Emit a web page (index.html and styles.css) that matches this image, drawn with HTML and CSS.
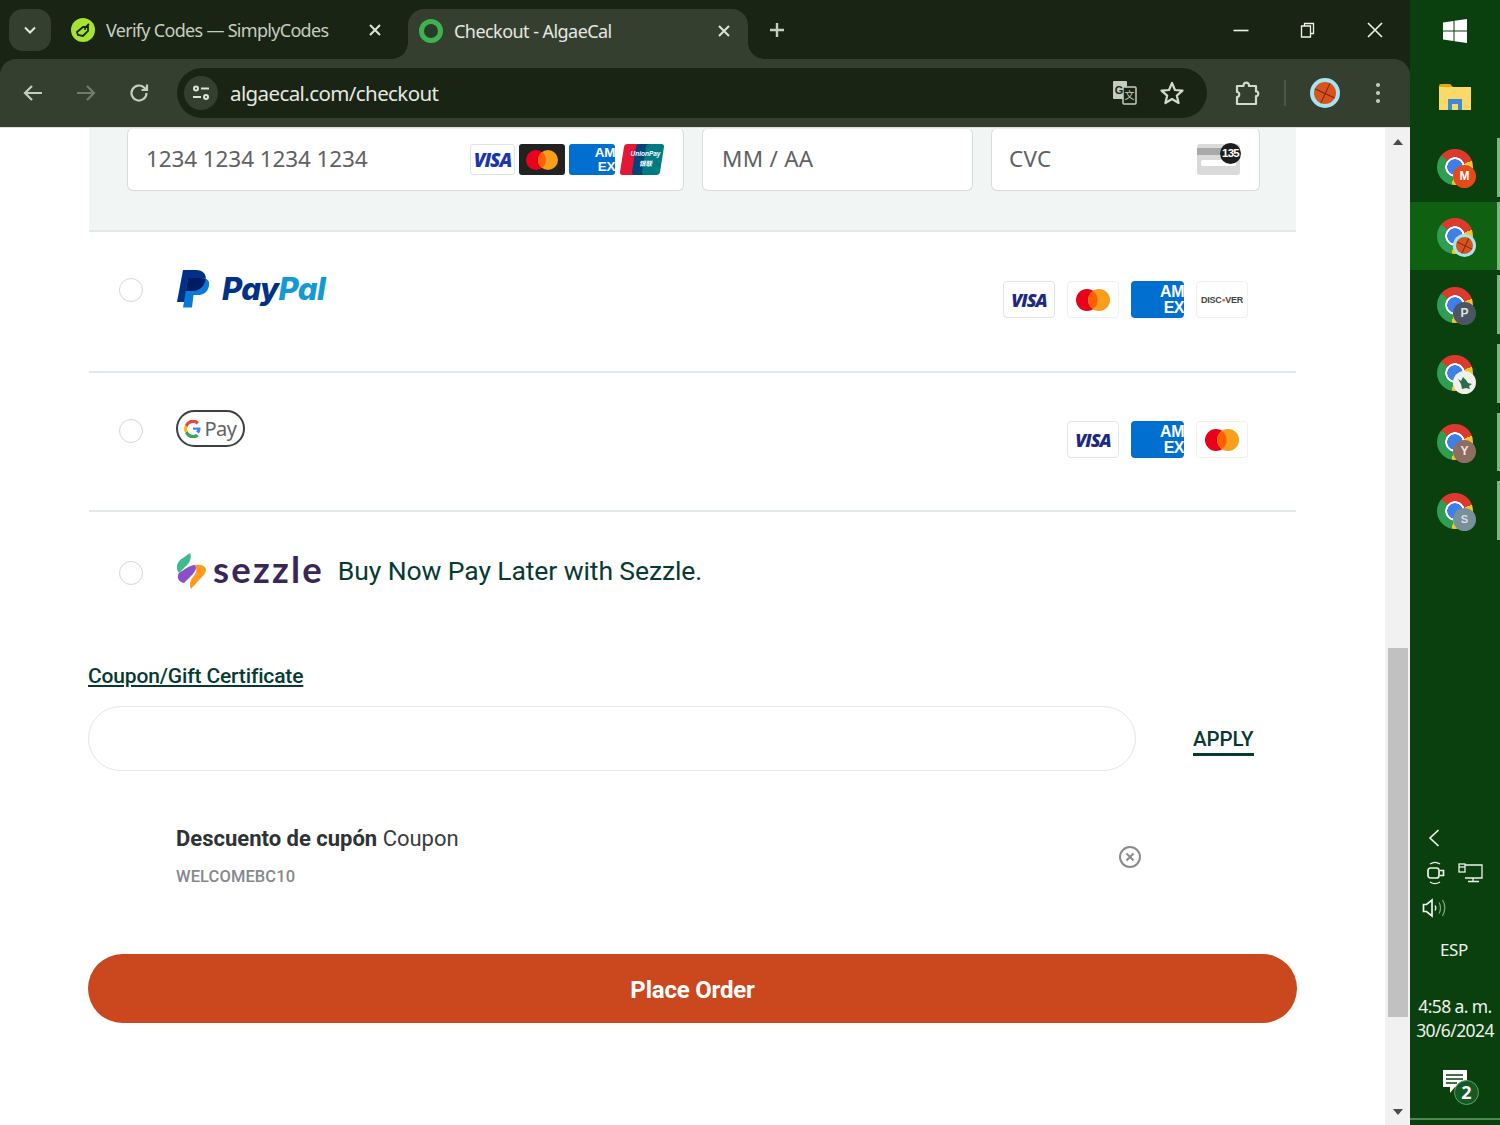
FILE: index.html
```html
<!DOCTYPE html>
<html lang="es">
<head>
<meta charset="utf-8">
<title>Checkout - AlgaeCal</title>
<link rel="stylesheet" href="styles.css">
</head>
<body>
<div class="screen">
  <div class="browser">
    <header class="tabstrip">
      <button class="tab-search"><svg width="16" height="16" viewBox="0 0 16 16"><path d="M3 5.500l5 5 5-5" class="ic-w"/></svg></button>
      <div class="tab tab-idle">
        <span class="fav-lime"><svg width="18" height="18" viewBox="0 0 18 18"><path d="M3 11l6-5h5v4l-5 5-5-1z" class="ic-tag"/><path d="M11 7l4-4" class="ic-tag"/><circle cx="11" cy="8" r="1" fill="#1a2414"/></svg></span>
        <span class="tab-title tab-title-idle">Verify Codes — SimplyCodes</span>
        <svg class="tab-x" width="14" height="14" viewBox="0 0 14 14"><path d="M2 2l10 10M12 2L2 12" class="ic-x"/></svg>
      </div>
      <div class="tab tab-active">
        <span class="fav-ring"></span>
        <span class="tab-title tab-title-on">Checkout - AlgaeCal</span>
        <svg class="tab-x" width="14" height="14" viewBox="0 0 14 14"><path d="M2 2l10 10M12 2L2 12" class="ic-x"/></svg>
      </div>
      <svg class="newtab" width="18" height="18" viewBox="0 0 18 18"><path d="M9 2v14M2 9h14" class="ic-plus"/></svg>
      <div class="winctl">
        <svg width="18" height="18" viewBox="0 0 18 18"><path d="M1.500 9.500h15" class="ic-win"/></svg>
        <svg width="18" height="18" viewBox="0 0 18 18"><path d="M5.500 4.500V2.500h9v10h-2.500M2.500 5h9v11h-9z" class="ic-win-thin"/></svg>
        <svg width="18" height="18" viewBox="0 0 18 18"><path d="M2 2l14 14M16 2L2 16" class="ic-win"/></svg>
      </div>
    </header>

    <nav class="toolbar">
      <svg class="nav-ic" width="24" height="24" viewBox="0 0 24 24"><path d="M21 12H4M11 5l-7 7 7 7" class="ic-nav"/></svg>
      <svg class="nav-ic nav-off" width="24" height="24" viewBox="0 0 24 24"><path d="M3 12h17M13 5l7 7-7 7" class="ic-nav"/></svg>
      <svg class="nav-ic" width="24" height="24" viewBox="0 0 24 24"><path d="M19.500 12a7.500 7.500 0 1 1-2.300-5.400L20 9M20 3.500V9h-5.500" class="ic-nav"/></svg>
      <div class="omnibox">
        <span class="site-info"><svg width="20" height="20" viewBox="0 0 20 20"><circle cx="5" cy="5.500" r="2" class="ic-tune"/><path d="M10 5.500h8M2 14h8" class="ic-tune"/><circle cx="15" cy="14" r="2" class="ic-tune"/></svg></span>
        <span class="url">algaecal.com/checkout</span>
        <svg class="omni-translate" width="26" height="26" viewBox="0 0 26 26"><rect x="1" y="1" width="14" height="18" rx="1" fill="#c5cdc0"/><rect x="11" y="7" width="13" height="17" rx="1" fill="#1a2414" stroke="#c5cdc0" stroke-width="1.500"/><text x="7" y="14" class="tr-g">G</text><text x="17.500" y="19" class="tr-a">文</text></svg>
        <svg class="omni-star" width="26" height="26" viewBox="0 0 26 26"><path d="M13 3l3 7 7.500.6-5.700 5 1.800 7.400-6.600-4-6.600 4 1.800-7.400-5.700-5 7.500-.6z" class="ic-star"/></svg>
      </div>
      <svg class="ext" width="26" height="26" viewBox="0 0 26 26"><path d="M3 6h6.500c-.5-4.500 6-4.500 5.500 0h7v5.500c3-.5 3 5 0 4.500v8H3v-7c3 0 3-5 0-5z" class="ic-star"/></svg>
      <span class="tool-sep"></span>
      <span class="avatar"><span class="ball"></span></span>
      <svg class="kebab" width="6" height="24" viewBox="0 0 6 24"><circle cx="3" cy="4" r="2" fill="#c5cdc0"/><circle cx="3" cy="12" r="2" fill="#c5cdc0"/><circle cx="3" cy="20" r="2" fill="#c5cdc0"/></svg>
    </nav>

    <div class="viewport">
      <main class="page">
        <section class="card-panel">
          <div class="field field-num">
            <span class="ph ph-num">1234 1234 1234 1234</span>
            <div class="brands">
              <span class="mini mini-visa">VISA</span>
              <span class="mini mini-mc"><svg width="34" height="22" viewBox="0 0 34 22"><circle cx="11" cy="11" r="10" fill="#eb001b"/><circle cx="23" cy="11" r="10" fill="#f79e1b"/><path d="M17 3a10 10 0 0 1 0 16 10 10 0 0 1 0-16z" fill="#ff5f00"/></svg></span>
              <span class="mini mini-amex"><span>AM<br>EX</span></span>
              <span class="mini-up"><i class="up-r"></i><i class="up-b"></i><i class="up-g"></i><span class="up-t">UnionPay<br>银联</span></span>
            </div>
          </div>
          <div class="field field-exp"><span class="ph">MM / AA</span></div>
          <div class="field field-cvc">
            <span class="ph">CVC</span>
            <span class="cvc-card"><i class="cvc-strip"></i><i class="cvc-line"></i><b class="cvc-badge">135</b></span>
          </div>
        </section>

        <section class="pay-row pay-row-first">
          <span class="radio"></span>
          <span class="pp-logo">
            <svg width="33" height="38" viewBox="0 0 33 38"><path d="M6 0h13c7 0 11 4 9.500 11-1.500 7-6 10-13 10H11L9 32H0z" fill="#003087"/><path d="M11 8h14c5.500 0 8 3 7 8-1.500 6.500-5.500 9-11.500 9h-4L15 37.500H6z" fill="#0a7ad6"/><path d="M11 8h11.500c2.300 0 4.300.4 6 1.300C27.500 16 23 21 15.500 21H9z" fill="#001c64"/></svg>
            <span class="pp-text"><span class="pp-pay">Pay</span><span class="pp-pal">Pal</span></span>
          </span>
          <div class="pay-cards">
            <span class="pc pc-visa">VISA</span>
            <span class="pc pc-light"><svg width="36" height="24" viewBox="0 0 36 24"><circle cx="12" cy="12" r="11" fill="#eb001b"/><circle cx="24" cy="12" r="11" fill="#f79e1b"/><path d="M18 3a11 11 0 0 1 0 18 11 11 0 0 1 0-18z" fill="#ff5f00"/></svg></span>
            <span class="pc pc-amex"><span>AM<br>EX</span></span>
            <span class="pc pc-light pc-disc">DISC<b>●</b>VER</span>
          </div>
        </section>

        <section class="pay-row pay-row-mid">
          <span class="radio"></span>
          <span class="gpay">
            <svg width="18" height="18" viewBox="0 0 18 18"><path d="M9 7.500h7.400c.4 2.300-.2 4.500-1.600 6l-2.700-2.100c.6-.4 1-1 1.200-1.700H9z" fill="#4285f4"/><path d="M3.500 11c.9 2.300 3 3.900 5.500 3.900 1.200 0 2.200-.3 3.100-.9l2.700 2.100A8.500 8.500 0 0 1 1 12.800z" fill="#34a853"/><path d="M3.500 11a6 6 0 0 1 0-4L1 5a8.500 8.500 0 0 0 0 7.800z" fill="#fbbc04"/><path d="M3.500 7C4.400 4.700 6.500 3.100 9 3.100c1.400 0 2.700.5 3.600 1.400l2.300-2.300A8.500 8.500 0 0 0 1 5z" fill="#ea4335"/></svg>
            <span class="gpay-t">Pay</span>
          </span>
          <div class="pay-cards pay-cards-low">
            <span class="pc pc-visa">VISA</span>
            <span class="pc pc-amex"><span>AM<br>EX</span></span>
            <span class="pc pc-light"><svg width="36" height="24" viewBox="0 0 36 24"><circle cx="12" cy="12" r="11" fill="#eb001b"/><circle cx="24" cy="12" r="11" fill="#f79e1b"/><path d="M18 3a11 11 0 0 1 0 18 11 11 0 0 1 0-18z" fill="#ff5f00"/></svg></span>
          </div>
        </section>

        <section class="pay-row pay-row-last">
          <span class="radio"></span>
          <span class="sz-logo">
            <svg width="32" height="38" viewBox="0 0 32 38"><path d="M15 1C17 6 15 11 10 15L4 21C0 16 2 9 8 6z" fill="#3dbb8c"/><path d="M4 21C1 26 4 30 9 31l7-7c5-5 6-8 4-11-3 0-7 2-10 4z" fill="#8a4fc9"/><path d="M20 13c6-1 11 1 11 5 0 3-3 6-6 9l-9 10c-2-4-1-8 2-12 4-4 4-8 2-12z" fill="#ff9a1f"/></svg>
            <span class="sz-text">sezzle</span>
          </span>
          <span class="sz-copy">Buy Now Pay Later with Sezzle.</span>
        </section>

        <a class="coupon-link" href="#">Coupon/Gift Certificate</a>
        <div class="coupon-form">
          <span class="coupon-input"></span>
          <a class="apply" href="#">APPLY</a>
        </div>
        <div class="coupon-applied">
          <div class="coupon-info">
            <div class="coupon-name"><b>Descuento de cupón</b> Coupon</div>
            <div class="coupon-code">WELCOMEBC10</div>
          </div>
          <svg class="coupon-x" width="24" height="24" viewBox="0 0 24 24"><circle cx="12" cy="12" r="10" class="ic-cx"/><path d="M8.500 8.500l7 7M15.500 8.500l-7 7" class="ic-cx"/></svg>
        </div>
        <button class="place">Place Order</button>
      </main>
      <aside class="scrollbar">
        <span class="arrow-up"></span>
        <span class="thumb"></span>
        <span class="arrow-down"></span>
      </aside>
    </div>
  </div>

  <aside class="taskbar">
    <div class="tb-start"><svg width="24" height="24" viewBox="0 0 24 24"><path d="M0 3.500l10.500-1.500v9.500H0zM11.500 1.800L24 0v11.500H11.500zM0 12.500h10.500V22L0 20.500zM11.500 12.500H24V24l-12.500-1.800z" fill="#fff"/></svg></div>
    <div class="tb-folder"><svg width="32" height="26" viewBox="0 0 32 26"><path d="M0 2a2 2 0 0 1 2-2h9l3 3H0z" fill="#e8a90c"/><rect y="3" width="32" height="23" fill="#fcd866"/><path d="M9 26V15h14v11h-4v-6h-6v6z" fill="#3b8ad9"/></svg></div>
    <div class="tile"><span class="chrome"></span><span class="badge badge-m">M</span></div>
    <div class="tile tile-on"><span class="chrome"></span><span class="badge badge-ball"><span class="ball ball-s"></span></span></div>
    <div class="tile"><span class="chrome"></span><span class="badge badge-p">P</span></div>
    <div class="tile"><span class="chrome"></span><span class="badge badge-frog"><svg width="16" height="14" viewBox="0 0 16 14"><path d="M1 3l3 2 2-4 3 3 2 3 4 1-3 2 1 3-4-1-4 1-1-5z" fill="#2f6b45"/></svg></span></div>
    <div class="tile"><span class="chrome"></span><span class="badge badge-y">Y</span></div>
    <div class="tile"><span class="chrome"></span><span class="badge badge-s">S</span></div>

    <div class="tray">
      <svg class="tray-chev" width="12" height="18" viewBox="0 0 12 18"><path d="M10.500 1L2 9l8.500 8" class="ic-tray"/></svg>
      <div class="tray-pair">
        <svg width="18" height="24" viewBox="0 0 18 24"><path d="M3 3c3-2 7-2 10 0M3 21c3 2 7 2 10 0" class="ic-tray-thin"/><rect x="1" y="7" width="11" height="10" rx="2.500" class="ic-tray"/><path d="M13 9.500h3.500v5H13" class="ic-tray"/></svg>
        <svg width="25" height="20" viewBox="0 0 25 20"><path d="M7 2h17v13H7M15 15v3M10 18.500h11" class="ic-tray-thin"/><rect x="1" y="1" width="6" height="8" class="ic-tray-thin"/><path d="M1 4h6" class="ic-tray-thin"/></svg>
      </div>
      <svg class="tray-vol" width="24" height="22" viewBox="0 0 24 22"><path d="M1.500 7.500h3L10 3v16l-5.500-4.500h-3z" class="ic-tray"/><path d="M13 8.500c1 1.500 1 3.500 0 5" class="ic-tray-thin"/><path d="M17 5.500c2 3 2 8 0 11M20.500 3c3 4.500 3 11 0 16" class="ic-tray-dim"/></svg>
      <div class="tray-lang">ESP</div>
      <div class="tray-clock"><div>4:58 a. m.</div><div>30/6/2024</div></div>
      <div class="tray-note">
        <svg width="24" height="24" viewBox="0 0 24 24"><path d="M0 0h24v17H12l-5 6v-6H0z" fill="#fff"/><path d="M3 5h17M3 9h17M3 13h11" stroke="#0a400d" stroke-width="1.500"/></svg>
        <span class="note-badge">2</span>
      </div>
    </div>
    <div class="tb-line"></div>
  </aside>
</div>
</body>
</html>
```

FILE: styles.css
```css
* { box-sizing: border-box; }
html, body { margin: 0; padding: 0; height: 1125px; overflow: hidden; background: #fff; }
body { font-family: Roboto, "Liberation Sans", sans-serif; }
.screen { display: flex; width: 1500px; height: 1125px; }
.browser { width: 1410px; display: flex; flex-direction: column; background: #1a2414; }

/* Tab strip */
.tabstrip { height: 59px; display: flex; align-items: flex-start; padding: 9px 0 0 9px; position: relative; }
.tab-search { width: 42px; height: 42px; border: 0; border-radius: 14px; background: #353f30; display: flex; align-items: center; justify-content: center; padding: 0; }
.tab { height: 50px; display: flex; align-items: center; position: relative; }
.tab-idle { width: 357px; padding: 0 0 9px 20px; }
.tab-active { width: 340px; padding: 0 0 6px 11px; background: #353f30; border-radius: 16px 16px 0 0; }
.tab-active::before, .tab-active::after { content: ""; position: absolute; bottom: 0; width: 16px; height: 16px; }
.tab-active::before { left: -16px; background: radial-gradient(circle at 0 0, #1a2414 15.500px, #353f30 16px); }
.tab-active::after { right: -16px; background: radial-gradient(circle at 100% 0, #1a2414 15.500px, #353f30 16px); }
.fav-lime { width: 24px; height: 24px; border-radius: 50%; background: #a4e32f; display: flex; align-items: center; justify-content: center; flex: none; }
.fav-ring { width: 24px; height: 24px; border-radius: 50%; border: 5px solid #3fb24f; background: #2a3a28; flex: none; }
.tab-title { margin-left: 11px; font: 18px/24px "Noto Sans", sans-serif; color: #c5cdc0; white-space: nowrap; letter-spacing: -.55px; width: 255px; }
.tab-title-idle { letter-spacing: -.7px; }
.tab-title-on { color: #e4e8e0; width: 252px; }
.tab-x { flex: none; margin-left: 0; }
.tab-idle .tab-x { margin-left: 7px; }
.tab-active .tab-x { margin-left: 11px; }
.newtab { position: absolute; left: 768px; top: 21px; }
.winctl { position: absolute; left: 1232px; top: 21px; display: flex; gap: 49px; }
.ic-w { fill: none; stroke: #e4e8e0; stroke-width: 2; }
.ic-tag { fill: none; stroke: #1a2414; stroke-width: 1.800; }
.ic-x { fill: none; stroke: #dfe4da; stroke-width: 2; }
.ic-plus { fill: none; stroke: #c5cdc0; stroke-width: 2.400; }
.ic-win { fill: none; stroke: #f0f2ee; stroke-width: 1.600; }
.ic-win-thin { fill: none; stroke: #f0f2ee; stroke-width: 1.300; }

/* Toolbar */
.toolbar { height: 68px; background: #353f30; border-radius: 16px 16px 0 0; display: flex; align-items: center; padding: 0 0 0 21px; flex: none; position: relative; }
.nav-ic { margin-right: 29px; flex: none; }
.nav-off { opacity: .42; }
.ic-nav { fill: none; stroke: #c5cdc0; stroke-width: 2.200; }
.omnibox { width: 1030px; height: 50px; border-radius: 25px; background: #1a2414; margin-left: -3px; display: flex; align-items: center; padding-left: 7px; flex: none; }
.site-info { width: 34px; height: 34px; border-radius: 50%; background: #353f30; display: flex; align-items: center; justify-content: center; flex: none; }
.ic-tune { fill: none; stroke: #dfe4da; stroke-width: 2; }
.url { margin-left: 12px; font: 20.500px/26px "Noto Sans", sans-serif; letter-spacing: -.6px; color: #e4e8e0; width: 702px; white-space: nowrap; }
.omni-translate { flex: none; margin-left: 180px; }
.omni-star { flex: none; margin-left: 21px; }
.ic-star { fill: none; stroke: #d3d9ce; stroke-width: 2.200; stroke-linejoin: round; }
.tr-g { font: 700 11px "Liberation Sans", sans-serif; fill: #1a2414; text-anchor: middle; }
.tr-a { font: 10px "Noto Sans CJK SC", sans-serif; fill: #c5cdc0; text-anchor: middle; }
.ext { margin-left: 27px; flex: none; }
.tool-sep { width: 2px; height: 26px; background: #4d5748; margin-left: 24px; flex: none; }
.avatar { width: 30px; height: 30px; border-radius: 50%; background: #a8e4ef; margin-left: 24px; display: flex; align-items: center; justify-content: center; flex: none; }
.ball { width: 22px; height: 22px; border-radius: 50%; background: #d9531e; display: block; position: relative; overflow: hidden; }
.ball::before { content: ""; position: absolute; left: 50%; top: -2px; bottom: -2px; width: 1px; background: #7c2a0b; transform: rotate(25deg); }
.ball::after { content: ""; position: absolute; top: 50%; left: -2px; right: -2px; height: 1px; background: #7c2a0b; transform: rotate(25deg); }
.ball-s { width: 17px; height: 17px; }
.kebab { margin-left: 35px; flex: none; }

/* Viewport */
.viewport { flex: 1; min-height: 0; display: flex; background: #fff; border-top: 1px solid #ddd; }
.page { width: 1385px; flex: none; padding-left: 88px; overflow: hidden; color: #073b32; }
.card-panel { width: 1207px; margin-left: 1px; height: 104px; background: #f1f5f4; border-bottom: 2px solid #dfe9e6; display: flex; gap: 18px; padding-left: 38px; align-items: flex-start; }
.field { height: 63px; background: #fff; border: 1px solid #d9dcdc; border-top-color: #eee; border-radius: 6px; display: flex; align-items: center; padding: 0 19px; justify-content: space-between; flex: none; }
.field-num { width: 557px; padding: 0 19px 0 18px; }
.field-exp { width: 271px; }
.field-cvc { width: 269px; padding-left: 17px; }
.ph { font: 22.500px/30px "Noto Sans", sans-serif; color: #5f6264; letter-spacing: .25px; white-space: nowrap; margin-top: -2px; }
.ph-num { letter-spacing: -.1px; }
.brands { display: flex; gap: 4px; align-items: center; }
.mini { width: 46px; height: 31px; border-radius: 3px; display: flex; align-items: center; justify-content: center; }
.mini-visa { width: 45px; background: #fff; border: 1px solid #e1e3e6; font: italic 800 19px "Open Sans", sans-serif; color: #1a36b0; letter-spacing: -1px; }
.mini-mc { background: #222; }
.mini-amex { background: #016fd0; justify-content: flex-end; overflow: hidden; }
.mini-amex span { font: 700 13.500px/14px "Liberation Sans", sans-serif; color: #fff; letter-spacing: -.4px; text-align: right; }
.mini-up { width: 44px; height: 31px; margin-left: 1px; position: relative; display: block; overflow: hidden; }
.mini-up i { position: absolute; top: 0; bottom: 0; width: 18px; transform: skewX(-9deg); border-radius: 3px; }
.up-r { left: 2px; background: #e21836; }
.up-b { left: 14px; background: #00447c; }
.up-g { left: 24px; background: #007b84; width: 18px; }
.up-t { position: absolute; left: 7px; right: 0; top: 5px; font: italic 700 6.500px/10px "Liberation Sans", "Noto Sans CJK SC", sans-serif; color: #fff; text-align: center; }
.cvc-card { width: 43px; height: 31px; background: #dadada; border-radius: 3px; display: block; position: relative; }
.cvc-strip { position: absolute; left: 0; right: 0; top: 4px; height: 7px; background: #a9a9a9; display: block; }
.cvc-line { position: absolute; left: 4px; right: 4px; top: 16px; height: 6px; background: #fff; border-radius: 2px; display: block; }
.cvc-badge { position: absolute; right: -1px; top: -1px; width: 21px; height: 21px; border-radius: 50%; background: #1d1d1d; color: #fff; font: 700 11.500px/21px "Liberation Sans", sans-serif; letter-spacing: -.8px; text-align: center; }

/* Payment rows */
.pay-row { width: 1207px; margin-left: 1px; border-bottom: 2px solid #dfe9e6; display: flex; align-items: flex-start; padding: 46px 48px 0 30px; position: relative; }
.pay-row-first { height: 141px; }
.pay-row-mid { height: 139px; }
.pay-row-last { border-bottom: 0; padding-top: 49px; height: 140px; }
.radio { width: 24px; height: 24px; border-radius: 50%; border: 1.500px solid #d5d8d8; background: #fff; flex: none; }
.pp-logo { margin: -8px 0 0 34px; display: flex; align-items: flex-start; }
.pp-logo svg { flex: none; }
.pp-text { margin: -3px 0 0 12px; font: italic 800 31px/44px Inter, sans-serif; letter-spacing: -.6px; white-space: nowrap; }
.pp-pay { color: #003087; }
.pp-pal { color: #139ad6; }
.pay-cards { margin-left: auto; margin-top: 3px; display: flex; gap: 12px; }
.pay-cards-low { margin-top: 2px; }
.pc { width: 52px; height: 37px; border-radius: 4px; display: flex; align-items: center; justify-content: center; }
.pc-visa { background: #fff; border: 1.500px solid #e2e4e7; font: italic 800 18px "Open Sans", sans-serif; color: #1c2b7f; letter-spacing: -1px; }
.pc-light { background: #fff; border: 1px solid #f0f0f0; }
.pc-amex { width: 53px; background: #016fd0; justify-content: flex-end; overflow: hidden; }
.pc-amex span { font: 700 16px/16px "Liberation Sans", sans-serif; color: #fff; letter-spacing: -.5px; text-align: right; }
.pc-disc { font: 700 9px "Liberation Sans", sans-serif; color: #444; letter-spacing: -.3px; }
.pc-disc b { color: #f47216; font-size: 7px; }
.gpay { width: 69px; height: 37px; border: 2px solid #3c4043; border-radius: 19px; margin: -9px 0 0 33px; display: flex; align-items: center; justify-content: center; gap: 2px; }
.gpay-t { font: 20px/24px "Noto Sans", sans-serif; color: #5f6368; letter-spacing: -.5px; }
.sz-logo { margin: -12px 0 0 32px; display: flex; align-items: center; height: 40px; }
.sz-logo svg { flex: none; margin-top: 4px; }
.sz-text { margin-left: 6px; font: 700 36.500px/40px Lato, sans-serif; letter-spacing: 2.200px; color: #382757; }
.sz-copy { margin: -8px 0 0 14px; font: 400 26.500px/36px Roboto, sans-serif; color: #073b32; white-space: nowrap; letter-spacing: -.1px; }

/* Coupon */
.coupon-link { display: block; width: max-content; margin-top: 11px; font: 500 21px/26px Roboto, sans-serif; color: #073b32; text-decoration: underline; letter-spacing: -.15px; }
.coupon-form { display: flex; align-items: flex-start; margin-top: 17px; width: 1209px; }
.coupon-input { width: 1048px; height: 65px; border: 1.500px solid #dfe9e6; border-radius: 33px; background: #fff; display: block; flex: none; }
.apply { margin: 20px 0 0 57px; font: 500 20.500px/27px Roboto, sans-serif; color: #073b32; text-decoration: none; border-bottom: 3px solid #073b32; padding-bottom: 0; letter-spacing: -.05px; }
.coupon-applied { display: flex; align-items: flex-start; padding-left: 88px; width: 1054px; margin-top: 53px; justify-content: space-between; }
.coupon-name { font: 22px/30px Roboto, sans-serif; color: #3a3c40; white-space: nowrap; }
.coupon-name b { font-weight: 700; color: #2f3236; }
.coupon-code { font: 500 16.500px/22px Roboto, sans-serif; color: #86888e; margin-top: 12px; letter-spacing: .1px; }
.coupon-x { margin-top: 21px; }
.ic-cx { fill: none; stroke: #8b8b8b; stroke-width: 2; }
.place { display: block; width: 1209px; height: 69px; margin-top: 66px; border: 0; border-radius: 35px; background: #cb471d; color: #fff; font: 700 24px/72px Roboto, sans-serif; letter-spacing: -.2px; padding: 0; text-align: center; }

/* Scrollbar */
.scrollbar { width: 25px; flex: none; background: #f1f1f1; display: flex; flex-direction: column; align-items: center; position: relative; padding-top: 11px; }
.arrow-up { width: 0; height: 0; border: 5.500px solid transparent; border-top: 0; border-bottom: 6px solid #4a4a4a; }
.thumb { width: 20px; height: 369px; background: #c1c1c1; margin-top: 503px; }
.arrow-down { width: 0; height: 0; border: 5.500px solid transparent; border-bottom: 0; border-top: 6px solid #4a4a4a; margin-top: auto; margin-bottom: 10px; }

/* Taskbar */
.taskbar { width: 90px; flex: none; background: #0a400d; display: flex; flex-direction: column; position: relative; color: #fff; }
.tb-start { height: 59px; display: flex; align-items: center; justify-content: center; padding-top: 2px; }
.tb-folder { height: 74px; display: flex; align-items: center; justify-content: center; padding-top: 1px; }
.tile { height: 68.700px; position: relative; display: flex; align-items: center; justify-content: center; flex: none; }
.tile::after { content: ""; position: absolute; right: 0; top: 5px; bottom: 5px; width: 3px; background: #7db580; }
.tile-on { background: #0f6010; }
.tile-on::after { top: 0; bottom: 0; }
.chrome { width: 36px; height: 36px; border-radius: 50%; display: block; background: radial-gradient(circle, #3f7fe8 0 7.500px, #fff 8px 9.500px, transparent 10px), conic-gradient(from -50deg, #dd3a2f 0 120deg, #f5c22e 120deg 240deg, #2f9e52 240deg 360deg); }
.badge { position: absolute; left: 43px; top: 32px; width: 23px; height: 23px; border-radius: 50%; display: flex; align-items: center; justify-content: center; font: 700 12px/23px "Liberation Sans", sans-serif; color: #fff; }
.badge-m { background: #e64a19; }
.badge-ball { background: #a8e4ef; }
.badge-p { background: #4b5563; color: #dfe3e8; }
.badge-frog { background: #eef0ec; }
.badge-y { background: #8d6e63; color: #efe6e0; }
.badge-s { background: #78909c; color: #d6dee2; font-size: 11px; }

.tray { position: absolute; left: 0; right: 0; top: 829px; display: flex; flex-direction: column; }
.tray-chev { margin-left: 18px; }
.tray-pair { display: flex; margin: 14px 0 0 17px; gap: 13px; align-items: center; }
.tray-vol { margin: 12px 0 0 12px; }
.ic-tray { fill: none; stroke: #eef2ec; stroke-width: 1.700; }
.ic-tray-thin { fill: none; stroke: #eef2ec; stroke-width: 1.300; }
.ic-tray-dim { fill: none; stroke: #7fa281; stroke-width: 1.300; }
.tray-lang { margin-top: 20px; text-align: center; font: 17px/22px "Noto Sans", sans-serif; letter-spacing: -.4px; color: #eef2ec; padding-right: 2px; }
.tray-clock { margin-top: 33px; text-align: center; font: 17.500px/24px "Noto Sans", sans-serif; letter-spacing: -.6px; color: #eef2ec; white-space: nowrap; }
.tray-note { position: relative; width: 24px; height: 24px; margin: 28px 0 0 33px; }
.note-badge { position: absolute; left: 11px; top: 10px; width: 25px; height: 25px; border-radius: 50%; border: 1.500px solid #5fa062; background: #145a22; font: 700 18px/22px "Noto Sans", sans-serif; color: #fff; text-align: center; }
.tb-line { position: absolute; left: 0; right: 0; top: 1118px; height: 2px; background: #4d8a50; }
```
